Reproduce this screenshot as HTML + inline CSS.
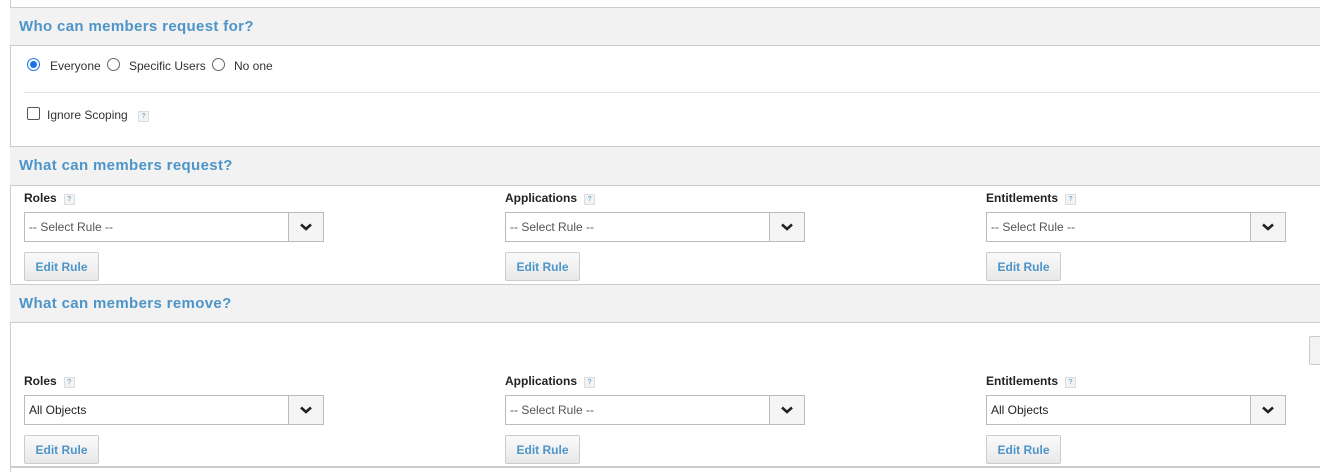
<!DOCTYPE html>
<html><head><style>
body{margin:0;width:1320px;height:472px;background:#fff;font-family:"Liberation Sans",sans-serif;position:relative;overflow:hidden}
.a{position:absolute}
.hdr{position:absolute;left:10px;right:0;background:#f2f2f2;border-top:1px solid #ccc;border-bottom:1px solid #ccc}
.hdr span{position:absolute;left:9px;font-weight:bold;font-size:15px;letter-spacing:0.35px;color:#4d95c9}
.lbl{position:absolute;font-size:12px;font-weight:bold;color:#222}
.q{display:inline-block;width:9px;height:9px;border:1px solid #ddd;background:#f3f3f3;font-size:7px;color:#4d95c9;text-align:center;line-height:9px;vertical-align:1px;margin-left:7px;font-weight:normal}
.sel{position:absolute;width:298px;height:28px;border:1px solid #bbb;background:#fff}
.sel .t{position:absolute;left:4px;top:7px;font-size:12px;color:#555}
.sel .b{position:absolute;right:0;top:0;width:34px;height:28px;border-left:1px solid #bbb;background:#f5f5f5}
.sel svg{position:absolute;left:11px;top:10px}
.btn{position:absolute;width:73px;height:27px;border:1px solid #ccc;border-radius:2px;background:linear-gradient(#fafafa,#e8e8e8);font-size:12px;font-weight:bold;color:#4d95c9;text-align:center;line-height:28px}
.r{position:absolute;width:11px;height:11px;border:1px solid #666;border-radius:50%;background:#fff}
.txt{position:absolute;font-size:12px;color:#333}
</style></head><body>
<div class="a" style="left:10px;top:0;width:1px;height:472px;background:#ccc"></div>
<div class="hdr" style="top:7px;height:37px"><span style="top:10px">Who can members request for?</span></div>
<div class="r" style="left:27px;top:58px;border-color:#1a73e8"><div style="position:absolute;left:2px;top:2px;width:7px;height:7px;border-radius:50%;background:#1a73e8"></div></div>
<div class="txt" style="left:50px;top:59px">Everyone</div>
<div class="r" style="left:107px;top:58px"></div>
<div class="txt" style="left:129px;top:59px">Specific Users</div>
<div class="r" style="left:212px;top:58px"></div>
<div class="txt" style="left:234px;top:59px">No one</div>
<div class="a" style="left:24px;right:0;top:92px;height:1px;background:#e5e5e5"></div>
<div class="a" style="left:27px;top:107px;width:11px;height:11px;border:1px solid #555;border-radius:2px"></div>
<div class="txt" style="left:47px;top:108px">Ignore Scoping <span class="q">?</span></div>

<div class="hdr" style="top:146px;height:38px"><span style="top:10px">What can members request?</span></div>
<div class="lbl" style="left:24px;top:191px">Roles<span class="q">?</span></div>
<div class="lbl" style="left:505px;top:191px">Applications<span class="q">?</span></div>
<div class="lbl" style="left:986px;top:191px">Entitlements<span class="q">?</span></div>
<div class="sel" style="left:24px;top:212px"><div class="t">-- Select Rule --</div><div class="b"><svg width="12" height="8" viewBox="0 0 12 8"><path d="M1 1.5L6 6L11 1.5" stroke="#222" stroke-width="2.6" fill="none"/></svg></div></div>
<div class="sel" style="left:505px;top:212px"><div class="t">-- Select Rule --</div><div class="b"><svg width="12" height="8" viewBox="0 0 12 8"><path d="M1 1.5L6 6L11 1.5" stroke="#222" stroke-width="2.6" fill="none"/></svg></div></div>
<div class="sel" style="left:986px;top:212px"><div class="t">-- Select Rule --</div><div class="b"><svg width="12" height="8" viewBox="0 0 12 8"><path d="M1 1.5L6 6L11 1.5" stroke="#222" stroke-width="2.6" fill="none"/></svg></div></div>
<div class="btn" style="left:24px;top:252px">Edit Rule</div>
<div class="btn" style="left:505px;top:252px">Edit Rule</div>
<div class="btn" style="left:986px;top:252px">Edit Rule</div>

<div class="hdr" style="top:284px;height:37px"><span style="top:10px">What can members remove?</span></div>
<div class="a" style="left:1309px;top:336px;width:20px;height:27px;border:1px solid #ccc;border-radius:2px;background:#f3f3f3"></div>
<div class="lbl" style="left:24px;top:374px">Roles<span class="q">?</span></div>
<div class="lbl" style="left:505px;top:374px">Applications<span class="q">?</span></div>
<div class="lbl" style="left:986px;top:374px">Entitlements<span class="q">?</span></div>
<div class="sel" style="left:24px;top:395px"><div class="t" style="color:#222">All Objects</div><div class="b"><svg width="12" height="8" viewBox="0 0 12 8"><path d="M1 1.5L6 6L11 1.5" stroke="#222" stroke-width="2.6" fill="none"/></svg></div></div>
<div class="sel" style="left:505px;top:395px"><div class="t">-- Select Rule --</div><div class="b"><svg width="12" height="8" viewBox="0 0 12 8"><path d="M1 1.5L6 6L11 1.5" stroke="#222" stroke-width="2.6" fill="none"/></svg></div></div>
<div class="sel" style="left:986px;top:395px"><div class="t" style="color:#222">All Objects</div><div class="b"><svg width="12" height="8" viewBox="0 0 12 8"><path d="M1 1.5L6 6L11 1.5" stroke="#222" stroke-width="2.6" fill="none"/></svg></div></div>
<div class="btn" style="left:24px;top:435px">Edit Rule</div>
<div class="btn" style="left:505px;top:435px">Edit Rule</div>
<div class="btn" style="left:986px;top:435px">Edit Rule</div>
<div class="a" style="left:10px;right:0;top:466px;height:2px;background:#ccc"></div>
</body></html>
